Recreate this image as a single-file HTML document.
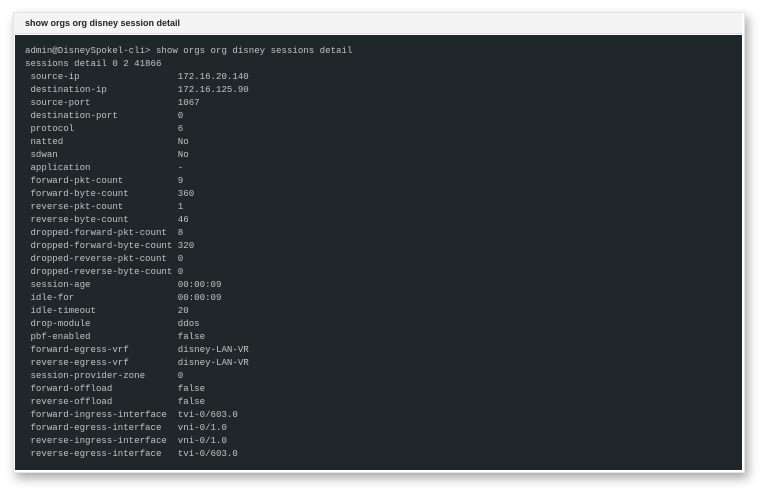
<!DOCTYPE html>
<html><head><style>
html,body{margin:0;padding:0;background:#fff;width:768px;height:497px;overflow:hidden}
.card{position:absolute;left:13px;top:12px;width:730px;height:459px;background:#fff;border:1px solid #e4e4e4;box-shadow:3px 5px 10px rgba(0,0,0,.35)}
.hd{position:absolute;left:0;top:0;width:728px;height:21px;background:#f4f4f4;border-bottom:1px solid #ddd;font:bold 9px "Liberation Sans",sans-serif;color:#222;line-height:21px;padding-left:11px;box-sizing:border-box}
.dk{position:absolute;left:1px;top:22px;width:727px;height:435px;background:#1f272a}
pre{margin:0;position:absolute;left:10px;top:9px;font:9.1px/13px "Liberation Mono",monospace;color:#bfc3c3}
</style></head><body>
<div class="card"><div class="hd">show orgs org disney session detail</div>
<div class="dk"><pre>admin@DisneySpokel-cli&gt; show orgs org disney sessions detail
sessions detail 0 2 41866
 source-ip                  172.16.20.140
 destination-ip             172.16.125.90
 source-port                1067
 destination-port           0
 protocol                   6
 natted                     No
 sdwan                      No
 application                -
 forward-pkt-count          9
 forward-byte-count         360
 reverse-pkt-count          1
 reverse-byte-count         46
 dropped-forward-pkt-count  8
 dropped-forward-byte-count 320
 dropped-reverse-pkt-count  0
 dropped-reverse-byte-count 0
 session-age                00:00:09
 idle-for                   00:00:09
 idle-timeout               20
 drop-module                ddos
 pbf-enabled                false
 forward-egress-vrf         disney-LAN-VR
 reverse-egress-vrf         disney-LAN-VR
 session-provider-zone      0
 forward-offload            false
 reverse-offload            false
 forward-ingress-interface  tvi-0/603.0
 forward-egress-interface   vni-0/1.0
 reverse-ingress-interface  vni-0/1.0
 reverse-egress-interface   tvi-0/603.0</pre></div></div>
</body></html>
